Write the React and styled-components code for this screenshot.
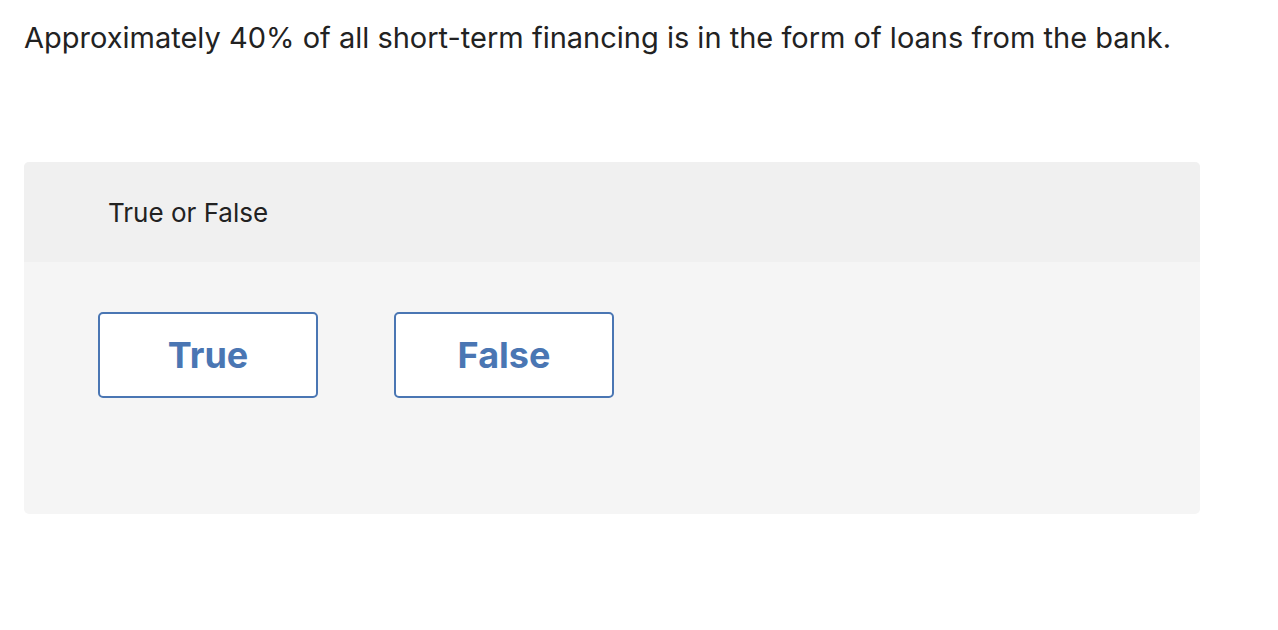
import React from "react";
import styled, { createGlobalStyle } from "styled-components";

const Global = createGlobalStyle`
  html, body { margin: 0; padding: 0; background: #fff; }
  body {
    font-family: Inter, "Open Sans", sans-serif;
    color: #222;
    font-variant-ligatures: none;
  }
`;

const Page = styled.div`
  padding: 18px 24px 0 24px;
  width: 1176px;
`;

const Prompt = styled.p`
  margin: 0;
  font-size: 29px;
  line-height: 40px;
  font-weight: 400;
  color: #222;
`;

const Card = styled.section`
  margin-top: 104px;
  border-radius: 5px;
  overflow: hidden;
  background: #f5f5f5;
`;

const CardHeader = styled.div`
  height: 100px;
  display: flex;
  align-items: center;
  padding-left: 84px;
  background: #f0f0f0;
  font-size: 26px;
  color: #222;
`;

const Choices = styled.div`
  display: flex;
  gap: 76px;
  padding: 50px 74px 116px;
`;

const Choice = styled.button`
  width: 220px;
  height: 86px;
  box-sizing: border-box;
  border: 2px solid #4a76b3;
  border-radius: 5px;
  background: #fff;
  color: #4a76b3;
  font-family: Inter, sans-serif;
  font-weight: 700;
  font-size: 36px;
  padding: 0;
  cursor: pointer;
`;

export default function App() {
  return (
    <>
      <Global />
      <Page>
        <Prompt>
          Approximately 40% of all short-term financing is in the form of loans from the bank.
        </Prompt>
        <Card>
          <CardHeader>True or False</CardHeader>
          <Choices>
            <Choice>True</Choice>
            <Choice>False</Choice>
          </Choices>
        </Card>
      </Page>
    </>
  );
}
